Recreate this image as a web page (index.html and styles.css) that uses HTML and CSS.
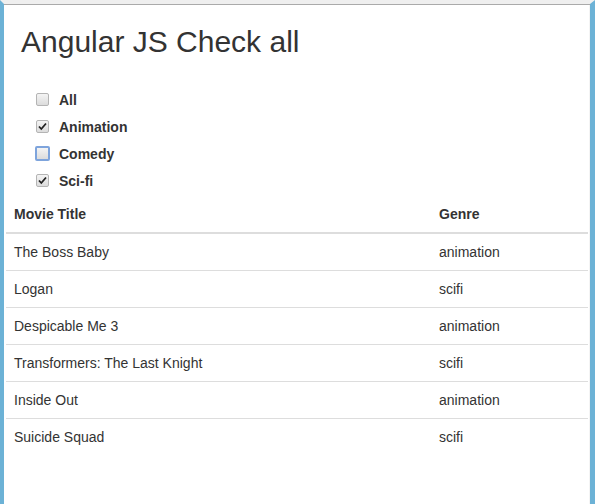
FILE: index.html
```html
<!DOCTYPE html>
<html>
<head>
    <title>Angular JS Check all</title>
    <link rel="stylesheet" href="styles.css">
</head>
<body>
    <div class="window">
        <h1 class="title">Angular JS Check all</h1>
        <div class="filters">
            <label class="filter"><input type="checkbox" class="check"> All</label>
            <label class="filter"><input type="checkbox" class="check" checked> Animation</label>
            <label class="filter"><input type="checkbox" class="check focused"> Comedy</label>
            <label class="filter"><input type="checkbox" class="check" checked> Sci-fi</label>
        </div>
        <table class="movies">
            <thead>
                <tr>
                    <th class="col-title">Movie Title</th>
                    <th>Genre</th>
                </tr>
            </thead>
            <tbody>
                <tr><td>The Boss Baby</td><td>animation</td></tr>
                <tr><td>Logan</td><td>scifi</td></tr>
                <tr><td>Despicable Me 3</td><td>animation</td></tr>
                <tr><td>Transformers: The Last Knight</td><td>scifi</td></tr>
                <tr><td>Inside Out</td><td>animation</td></tr>
                <tr><td>Suicide Squad</td><td>scifi</td></tr>
            </tbody>
        </table>
    </div>
</body>
</html>
```
FILE: styles.css
```css
html, body {
    margin: 0;
    height: 100%;
}
body {
    font-family: "Liberation Sans", Arial, sans-serif;
    font-size: 14px;
    color: #333;
    background: #fff;
}
.window {
    box-sizing: border-box;
    height: 100%;
    border-left: 4px solid #6cb2d6;
    border-right: 5px solid #6cb2d6;
    border-top: 4px solid #efefef;
    box-shadow: inset 0 1px 0 #aaa, inset -1px 0 0 #f4f4f4;
    padding-top: 1px;
}
.title {
    margin: 20px 0 0 17px;
    font-size: 30px;
    font-weight: normal;
    line-height: 33px;
}
.filters {
    margin: 28px 0 0 32px;
}
.filter {
    display: flex;
    align-items: center;
    height: 27px;
    font-weight: bold;
}
.check {
    -webkit-appearance: none;
    appearance: none;
    box-sizing: border-box;
    width: 13px;
    height: 13px;
    margin: 0 10px 0 0;
    border: 1px solid #b4b4b4;
    border-radius: 2px;
    background: linear-gradient(#f4f4f4, #dcdcdc);
}
.check:checked {
    background: url("data:image/svg+xml;utf8,<svg xmlns='http://www.w3.org/2000/svg' viewBox='0 0 11 11'><path d='M2 5.5 L4.3 8 L9 2.5' fill='none' stroke='%23222' stroke-width='1.8'/></svg>") center / 11px 11px no-repeat, linear-gradient(#f4f4f4, #dcdcdc);
}
.check.focused {
    border: 2px solid #7ea4dc;
    width: 15px;
    height: 15px;
    margin-left: -1px;
    margin-right: 9px;
}
.movies {
    width: calc(100% - 4px);
    margin: 2px 2px 0;
    border-collapse: collapse;
}
.movies th, .movies td {
    padding: 8px;
    line-height: 20px;
    text-align: left;
}
.movies th {
    border-bottom: 2px solid #ddd;
}
.movies td {
    border-bottom: 1px solid #ddd;
}
.movies tr:last-child td {
    border-bottom: none;
}
.col-title {
    width: 409px;
}
```
